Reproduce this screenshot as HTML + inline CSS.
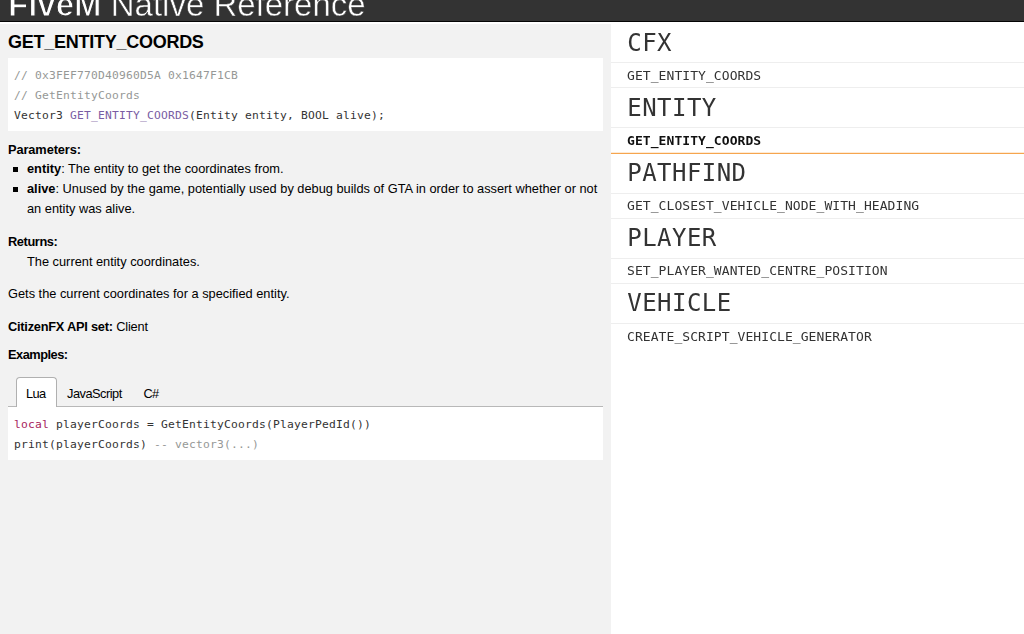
<!DOCTYPE html>
<html lang="en">
<head>
<meta charset="utf-8">
<title>FiveM Native Reference</title>
<style>
html,body{margin:0;padding:0;}
body{width:1024px;height:634px;overflow:hidden;position:relative;background:#f2f2f2;color:#000;
  font-family:"Liberation Sans",sans-serif;font-size:12.8px;line-height:20px;}
#hdr{position:absolute;left:0;top:0;width:1024px;height:21px;background:#333;overflow:hidden;z-index:5;
  border-bottom:1px solid #050505;box-shadow:0 2px 0 #fff;}
#hdr h1{position:absolute;left:8px;top:-18px;transform:translateY(.5px);will-change:transform;margin:0;font-size:33px;line-height:44px;font-weight:400;color:#fff;white-space:nowrap;-webkit-text-stroke:.5px #333;}
#hdr h1 b{font-weight:700;-webkit-text-stroke:1.1px #333;}
#main{position:absolute;left:0;top:21px;width:611px;height:613px;background:#f2f2f2;}
#nav{position:absolute;left:611px;top:22px;width:413px;height:612px;will-change:transform;
  font-family:"DejaVu Sans Mono","Liberation Mono",monospace;color:#333;}
.abs{position:absolute;margin:0;white-space:nowrap;}
h2.t{left:8px;top:29.5px;font-size:18px;line-height:24px;font-weight:700;letter-spacing:-.26px;}
pre{position:absolute;margin:0;left:8px;width:583px;padding:8px 6px 4px;background:#fff;
  font-family:"DejaVu Sans Mono","Liberation Mono",monospace;font-size:11.3px;letter-spacing:.197px;line-height:20px;color:#333;}
.c{color:#969896}.k{color:#a71d5d}.f{color:#795da3}
ul{position:absolute;margin:0;padding:0;list-style:none;left:27px;top:159px;width:575px;}
ul li{position:relative;white-space:nowrap;}
ul li:before{content:"";position:absolute;left:-14px;top:8px;width:5px;height:5px;background:#000;}
.tabs{position:absolute;left:8px;top:377px;width:595px;height:29px;border-bottom:1px solid #b8b8b8;}
.tab{position:absolute;top:0;height:29px;line-height:32px;padding:0 10px;border:1px solid transparent;border-bottom:0;}
.tab.on{background:#fff;border-color:#b0b0b0;border-radius:4px 4px 0 0;height:30px;}
#navbg{position:absolute;left:611px;top:22px;width:413px;height:612px;background:#fff;}
#nav h3{margin:0;height:39px;border-bottom:1px solid #eee;font-size:24px;font-weight:400;line-height:41px;padding-left:16.3px;letter-spacing:.45px;overflow:hidden;box-sizing:content-box;}
#nav div{height:24.25px;border-bottom:1px solid #eee;font-size:13px;line-height:26px;padding-left:16px;letter-spacing:.07px;overflow:hidden;}
#nav div.on{font-weight:700;color:#111;border-bottom-color:#f6a54e;box-shadow:inset 0 -1px 0 #fdebd6;}
#nav div.last{border-bottom:0;}
</style>
</head>
<body>
<div id="hdr"><h1><b>FiveM</b> Native Reference</h1></div>
<div id="main">
</div>
<h2 class="abs t">GET_ENTITY_COORDS</h2>
<pre style="top:58px;padding-bottom:5px"><span class="c">// 0x3FEF770D40960D5A 0x1647F1CB</span>
<span class="c">// GetEntityCoords</span>
Vector3 <span class="f">GET_ENTITY_COORDS</span>(Entity entity, BOOL alive);</pre>
<p class="abs" style="left:8px;top:140px;letter-spacing:-.1px"><b>Parameters:</b></p>
<ul>
<li><b>entity</b>: The entity to get the coordinates from.</li>
<li><b>alive</b>: Unused by the game, potentially used by debug builds of GTA in order to assert whether or not<br>an entity was alive.</li>
</ul>
<p class="abs" style="left:8px;top:232px;letter-spacing:-.4px"><b>Returns:</b></p>
<p class="abs" style="left:27px;top:252px">The current entity coordinates.</p>
<p class="abs" style="left:8px;top:284px">Gets the current coordinates for a specified entity.</p>
<p class="abs" style="left:8px;top:317px"><b style="letter-spacing:-.24px">CitizenFX API set:</b> <span style="letter-spacing:-.2px">Client</span></p>
<p class="abs" style="left:8px;top:345px;letter-spacing:-.5px"><b>Examples:</b></p>
<div class="tabs">
<span class="tab on" style="left:8px;width:19px;padding:0 11px 0 9px;letter-spacing:-.6px">Lua</span>
<span class="tab" style="left:48px;letter-spacing:-.5px">JavaScript</span>
<span class="tab" style="left:124.5px;letter-spacing:-.7px">C#</span>
</div>
<pre style="top:407px;padding-bottom:5px"><span class="k">local</span> playerCoords = GetEntityCoords(PlayerPedId())
print(playerCoords) <span class="c">-- vector3(...)</span></pre>
<div id="navbg"></div>
<div id="nav">
<h3 style="margin-top:1px">CFX</h3>
<div>GET_ENTITY_COORDS</div>
<h3>ENTITY</h3>
<div class="on">GET_ENTITY_COORDS</div>
<h3 style="line-height:39px">PATHFIND</h3>
<div style="line-height:24px">GET_CLOSEST_VEHICLE_NODE_WITH_HEADING</div>
<h3 style="line-height:39px">PLAYER</h3>
<div style="line-height:24px">SET_PLAYER_WANTED_CENTRE_POSITION</div>
<h3 style="line-height:39px">VEHICLE</h3>
<div class="last">CREATE_SCRIPT_VEHICLE_GENERATOR</div>
</div>
</body>
</html>
